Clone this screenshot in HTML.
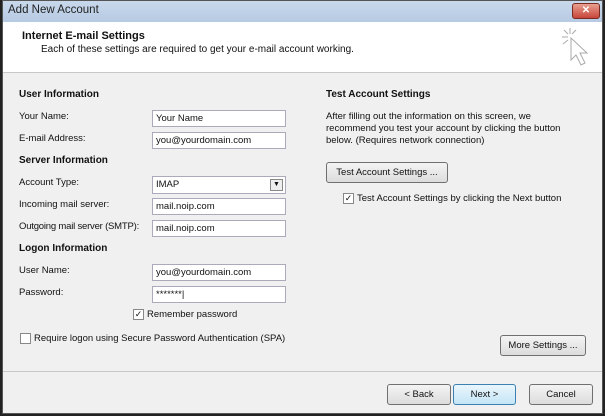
<!DOCTYPE html>
<html><head><style>
*{margin:0;padding:0;box-sizing:border-box}
body{width:605px;height:416px;overflow:hidden;background:#222;font-family:"Liberation Sans",sans-serif;font-size:9.5px;color:#111;position:relative}
.a{position:absolute}
.win{position:absolute;left:2px;top:0;width:601px;height:414px;background:#f0f0f0;border:1px solid #555}
.title{left:0;top:0;width:599px;height:21px;background:linear-gradient(#c9d9ec,#b6cae3);font-size:11.5px;padding:3px 0 0 5px;color:#222}
.x{left:569px;top:2px;width:28px;height:16px;background:linear-gradient(#e8a090,#c8453a);border:1px solid #7a2a20;border-radius:3px;color:#fff;font-weight:bold;text-align:center;font-size:10px;line-height:14px}
.hdr{left:0;top:21px;width:599px;height:51px;background:#fff;border-bottom:1px solid #c8c8c8}
.in{position:absolute;height:17px;background:#fff;border:1px solid #aab;padding:2px 0 0 3px;font-size:9.5px}
.btn{position:absolute;height:21px;border:1px solid #707070;border-radius:3px;background:linear-gradient(#f4f4f4,#dcdcdc);text-align:center;line-height:19px;font-size:9.5px}
.cb{position:absolute;width:11px;height:11px;border:1px solid #888;background:#fff;font-size:9px;line-height:9px;text-align:center}
.h{font-weight:bold;font-size:10px}
</style></head><body>
<div class="win">
<div class="a title">Add New Account</div>
<div class="a x">✕</div>
<div class="a hdr">
<div class="a" style="left:19px;top:8px;font-size:11px;font-weight:bold">Internet E-mail Settings</div>
<div class="a" style="left:38px;top:22px;font-size:10px">Each of these settings are required to get your e-mail account working.</div>
<svg class="a" style="left:555px;top:3px" width="36" height="46" viewBox="0 0 36 46"><g stroke="#aaa" stroke-width="1" fill="none"><path d="M12 3v6M4 12h6M6 5l4 4M18 5l-4 4M5 19l5-4"/><path d="M13 13v22l5-5 5 10 4-2-5-10h7z" fill="#fff"/></g></svg>
</div>
<div class="a h" style="left:16px;top:88px">User Information</div>
<div class="a" style="left:16px;top:110px">Your Name:</div>
<div class="in" style="left:149px;top:109px;width:134px">Your Name</div>
<div class="a" style="left:16px;top:132px">E-mail Address:</div>
<div class="in" style="left:149px;top:131px;width:134px">you@yourdomain.com</div>
<div class="a h" style="left:16px;top:154px">Server Information</div>
<div class="a" style="left:16px;top:176px">Account Type:</div>
<div class="in" style="left:149px;top:175px;width:134px;height:18px">IMAP<div class="a" style="right:2px;top:2px;width:13px;height:12px;border:1px solid #888;background:#eee;font-size:7px;text-align:center;line-height:10px">▼</div></div>
<div class="a" style="left:16px;top:198px">Incoming mail server:</div>
<div class="in" style="left:149px;top:197px;width:134px">mail.noip.com</div>
<div class="a" style="left:16px;top:220px;letter-spacing:-0.2px">Outgoing mail server (SMTP):</div>
<div class="in" style="left:149px;top:219px;width:134px">mail.noip.com</div>
<div class="a h" style="left:16px;top:242px">Logon Information</div>
<div class="a" style="left:16px;top:264px">User Name:</div>
<div class="in" style="left:149px;top:263px;width:134px">you@yourdomain.com</div>
<div class="a" style="left:16px;top:286px">Password:</div>
<div class="in" style="left:149px;top:285px;width:134px">*******|</div>
<div class="cb" style="left:130px;top:308px">✓</div>
<div class="a" style="left:144px;top:308px">Remember password</div>
<div class="cb" style="left:17px;top:332px"></div>
<div class="a" style="left:31px;top:332px">Require logon using Secure Password Authentication (SPA)</div>
<div class="a h" style="left:323px;top:88px">Test Account Settings</div>
<div class="a" style="left:323px;top:110px;width:260px;line-height:12px">After filling out the information on this screen, we<br>recommend you test your account by clicking the button<br>below. (Requires network connection)</div>
<div class="btn" style="left:323px;top:161px;width:122px">Test Account Settings ...</div>
<div class="cb" style="left:340px;top:192px">✓</div>
<div class="a" style="left:354px;top:192px">Test Account Settings by clicking the Next button</div>
<div class="btn" style="left:497px;top:334px;width:86px">More Settings ...</div>
<div class="a" style="left:0;top:370px;width:599px;border-top:1px solid #c8c8c8"></div>
<div class="btn" style="left:384px;top:383px;width:64px">&lt; Back</div>
<div class="btn" style="left:450px;top:383px;width:63px;border-color:#3c7fb1;background:linear-gradient(#eaf6fd,#c4e5f6)">Next &gt;</div>
<div class="btn" style="left:526px;top:383px;width:64px">Cancel</div>
</div>
</body></html>
